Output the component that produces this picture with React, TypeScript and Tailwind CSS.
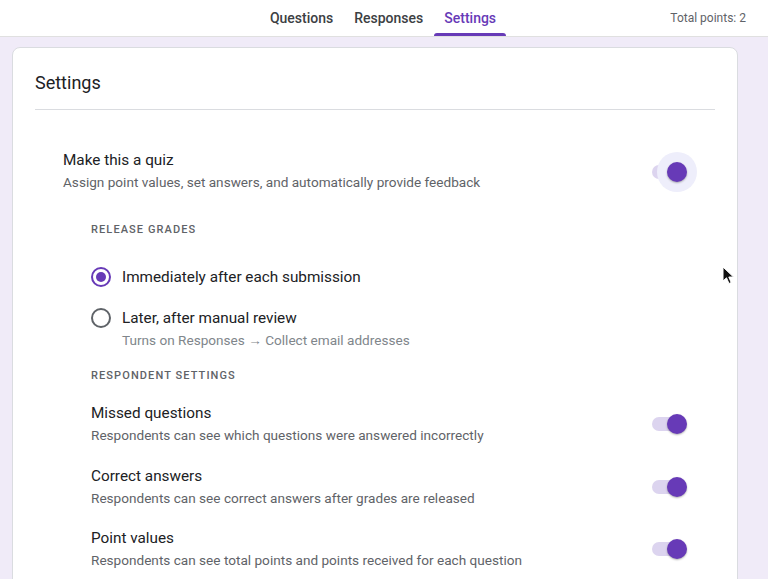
import React from 'react';

const tabs = ['Questions', 'Responses', 'Settings'];

function Toggle({ focused = false }: { focused?: boolean }) {
  return (
    <div className={`relative h-[20px] w-[36px] flex-shrink-0 ${focused ? 'mt-[3px]' : 'mt-[1px]'}`}>
      <div className="absolute left-[1px] top-[3px] h-[14px] w-[34px] rounded-full bg-[#dcd4ef]" />
      {focused && (
        <div className="absolute left-[6px] top-[-10px] h-[40px] w-[40px] rounded-full bg-[#eeeefb]" />
      )}
      <div className="absolute left-[16px] top-0 h-[20px] w-[20px] rounded-full bg-[#673ab7] shadow-[0_1px_2px_rgba(0,0,0,0.3)]" />
    </div>
  );
}

function Radio({ checked }: { checked: boolean }) {
  return (
    <div
      className={`flex h-[20px] w-[20px] flex-shrink-0 items-center justify-center rounded-full border-2 ${
        checked ? 'border-[#673ab7]' : 'border-[#5f6368]'
      }`}
    >
      {checked && <div className="h-[10px] w-[10px] rounded-full bg-[#673ab7]" />}
    </div>
  );
}

function SectionLabel({ children, className = '' }: { children: React.ReactNode; className?: string }) {
  return (
    <div className={`h-[16px] text-[11px] font-medium uppercase leading-[16px] tracking-[0.1em] text-[#5f6368] ${className}`}>
      {children}
    </div>
  );
}

function ToggleRow({ title, desc, className = '' }: { title: string; desc: string; className?: string }) {
  return (
    <div className={`flex items-center justify-between ${className}`}>
      <div>
        <div className="text-[15.3px] leading-[24px] text-[#202124]">{title}</div>
        <div className="text-[13.6px] leading-[20px] text-[#5f6368]">{desc}</div>
      </div>
      <Toggle />
    </div>
  );
}

export default function App() {
  return (
    <div className="relative h-[579px] w-[768px] overflow-hidden bg-[#f0ebf8] font-['Roboto',sans-serif]">
      {/* Top tabs */}
      <div className="relative flex h-[37px] items-end justify-center border-b border-[#e0e0e0] bg-white">
        <div className="ml-[-2px] flex gap-[1px]">
          {tabs.map((t) => {
            const active = t === 'Settings';
            return (
              <div key={t} className="relative flex h-[36px] items-center px-[10px]">
                <span
                  className={`text-[14px] font-medium ${active ? 'text-[#673ab7]' : 'text-[#3c4043]'}`}
                >
                  {t}
                </span>
                {active && (
                  <div className="absolute bottom-0 left-0 right-0 h-[3px] rounded-t-[3px] bg-[#673ab7]" />
                )}
              </div>
            );
          })}
        </div>
        <div className="absolute right-[22px] top-[10px] text-[12px] leading-[16px] text-[#5f6368]">
          Total points: 2
        </div>
      </div>

      {/* Settings card */}
      <div className="px-[12px] pt-[10px]">
        <div className="w-[726px] rounded-lg border border-[#dadce0] bg-white pb-8 pl-[22px] pr-[22px]">
          <div className="pt-[23px] text-[18px] leading-[24px] text-[#202124]">Settings</div>
          <div className="mt-[14px] h-px bg-[#dadce0]" />

          <div className="mr-[28px] ml-[28px] mt-[38px] flex items-center justify-between">
            <div>
              <div className="text-[15.3px] leading-[24px] text-[#202124]">Make this a quiz</div>
              <div className="text-[13.6px] leading-[20px] text-[#5f6368]">
                Assign point values, set answers, and automatically provide feedback
              </div>
            </div>
            <Toggle focused />
          </div>

          <div className="ml-[56px] mr-[28px]">
            <SectionLabel className="mt-[30px]">Release grades</SectionLabel>

            <div className="mt-[27px] flex h-[24px] items-center gap-[11px]">
              <Radio checked />
              <span className="text-[15.3px] text-[#202124]">Immediately after each submission</span>
            </div>
            <div className="mt-[17px] flex h-[24px] items-center gap-[11px]">
              <Radio checked={false} />
              <span className="text-[15.3px] text-[#202124]">Later, after manual review</span>
            </div>
            <div className="ml-[31px] text-[13.6px] leading-[20px] text-[#80868b]">
              Turns on Responses → Collect email addresses
            </div>

            <SectionLabel className="mt-[18px]">Respondent settings</SectionLabel>

            <ToggleRow
              className="mt-[17px]"
              title="Missed questions"
              desc="Respondents can see which questions were answered incorrectly"
            />
            <ToggleRow
              className="mt-[19px]"
              title="Correct answers"
              desc="Respondents can see correct answers after grades are released"
            />
            <ToggleRow
              className="mt-[18px]"
              title="Point values"
              desc="Respondents can see total points and points received for each question"
            />
          </div>
        </div>
      </div>

      {/* Mouse pointer */}
      <svg
        className="absolute left-[722px] top-[266px]"
        width="13"
        height="19"
        viewBox="0 0 13 19"
      >
        <path
          d="M1 1 L1 15 L4.5 11.8 L7 17.5 L9.2 16.5 L6.8 11 L11.5 11 Z"
          fill="#111"
          stroke="#fff"
          strokeWidth="1"
          strokeLinejoin="round"
        />
      </svg>
    </div>
  );
}
